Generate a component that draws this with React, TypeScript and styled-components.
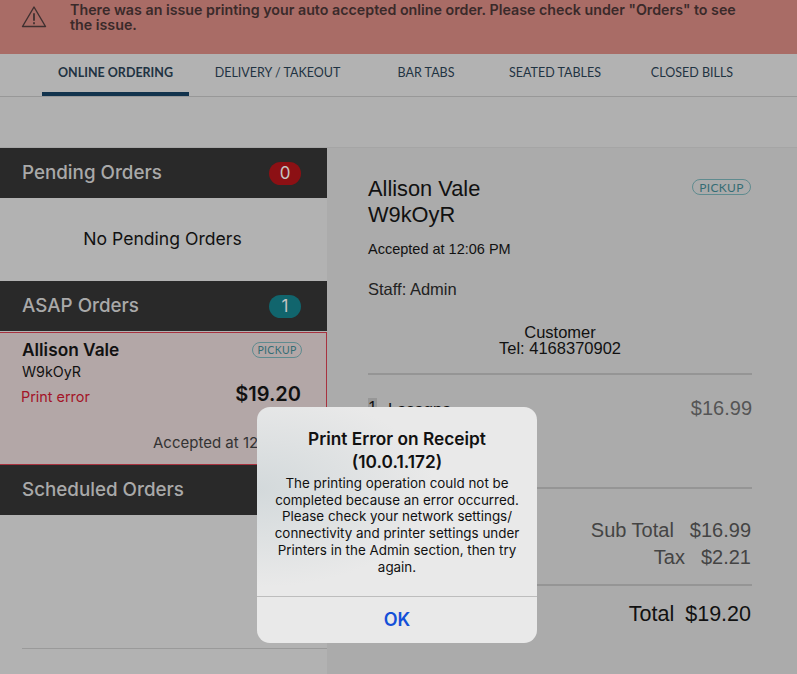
import styled, { createGlobalStyle } from "styled-components";

export default App;

const GlobalStyle = createGlobalStyle`
  html, body {
    margin: 0;
    padding: 0;
    background: #ababab;
  }
  * {
    box-sizing: border-box;
  }
`;

const sans = `"Open Sans", "Liberation Sans", sans-serif`;
const helvetica = `"Liberation Sans", Arial, sans-serif`;

const Page = styled.div`
  position: relative;
  width: 797px;
  height: 674px;
  overflow: hidden;
  background: #ababab;
  font-family: ${sans};
`;

const Banner = styled.div`
  height: 54px;
  background: #a96c66;
  display: flex;
  padding-left: 21px;
  gap: 23px;
`;

const BannerText = styled.div`
  width: 680px;
  margin-top: 2px;
  font-family: Inter, sans-serif;
  font-size: 14.25px;
  line-height: 15px;
  font-weight: 600;
  color: #3a2a2a;
`;

const TabBar = styled.div`
  height: 43px;
  background: #b2b2b2;
  border-bottom: 1px solid #989898;
  display: flex;
  padding-left: 42px;
`;

const Tab = styled.div<{ $active?: boolean; $width: number }>`
  width: ${(props) => props.$width}px;
  height: 42px;
  display: flex;
  justify-content: center;
  padding-top: 11px;
  font-family: Lato, sans-serif;
  font-size: 12.5px;
  line-height: 16px;
  font-weight: ${(props) => (props.$active ? 700 : 400)};
  color: #1f3342;
  border-bottom: ${(props) => (props.$active ? "4px solid #12334d" : "none")};
`;

const Spacer = styled.div`
  height: 51px;
  background: #b0b0b0;
  border-bottom: 1px solid #a5a5a5;
`;

const Columns = styled.div`
  display: flex;
  height: 526px;
`;

const LeftColumn = styled.div`
  width: 327px;
  background: #b2b2b2;
`;

const SectionHeader = styled.div`
  height: 50px;
  background: #292929;
  display: flex;
  align-items: center;
  justify-content: space-between;
  padding: 0 26px 1px 22px;
  font-family: Inter, sans-serif;
  font-size: 18.8px;
  font-weight: 500;
  color: #a9a9a9;
`;

const Count = styled.div<{ $color: string }>`
  width: 32px;
  height: 23px;
  margin-top: 1px;
  border-radius: 12px;
  background: ${(props) => props.$color};
  display: flex;
  align-items: center;
  justify-content: center;
  font-size: 17px;
  font-weight: 400;
  color: #c4c4c4;
`;

const EmptyNote = styled.div`
  height: 83px;
  display: flex;
  align-items: center;
  justify-content: center;
  padding: 0 2px 2px 0;
  font-family: Inter, sans-serif;
  font-size: 17.6px;
  color: #111;
`;

const OrderCard = styled.div`
  height: 133px;
  margin-top: 1px;
  background: #b3a7a7;
  border: 1px solid #a8323f;
  border-left: none;
  padding: 5px 25px 0 22px;
  font-family: Inter, sans-serif;
  color: #111;
`;

const CardRow = styled.div`
  display: flex;
  justify-content: space-between;
  align-items: center;
`;

const ErrorRow = styled(CardRow)`
  margin-top: 4px;
`;

const CardName = styled.div`
  font-size: 17.3px;
  line-height: 23px;
  font-weight: 600;
`;

const CardCode = styled.div`
  font-size: 14.3px;
  line-height: 20px;
  margin-top: 1px;
`;

const PrintError = styled.div`
  margin-left: -1px;
  font-size: 14.4px;
  color: #a31428;
`;

const CardTotal = styled.div`
  margin-top: -4px;
  font-size: 20px;
  font-weight: 600;
`;

const CardAccepted = styled.div`
  margin-top: 27px;
  padding-left: 131px;
  font-size: 15px;
  line-height: 20px;
  white-space: nowrap;
  color: #333;
`;

const Pill = styled.div<{ $wide?: boolean }>`
  width: ${(props) => (props.$wide ? 59 : 50)}px;
  height: 16px;
  margin: ${(props) => (props.$wide ? "3px 1px 0 0" : "0 -1px 0 0")};
  border: 1px solid #5f8b8f;
  border-radius: 8px;
  display: flex;
  align-items: center;
  justify-content: center;
  font-family: Lato, sans-serif;
  font-size: ${(props) => (props.$wide ? 12 : 10.5)}px;
  letter-spacing: 0.3px;
  color: #356d74;
`;

const FooterRule = styled.div`
  margin: 133px 0 0 22px;
  height: 1px;
  background: #9a9a9a;
`;

const Detail = styled.div`
  flex: 1;
  background: #ababab;
  padding: 28px 45px 0 41px;
  font-family: ${helvetica};
  color: #111;
`;

const DetailTop = styled.div`
  display: flex;
  justify-content: space-between;
`;

const DetailName = styled.div`
  font-size: 21.8px;
  line-height: 26px;
`;

const Accepted = styled.div`
  margin-top: 12px;
  font-size: 14.5px;
  line-height: 18px;
`;

const Staff = styled.div`
  margin-top: 21px;
  font-size: 16.5px;
  line-height: 20px;
  color: #222;
`;

const CustomerBlock = styled.div`
  margin-top: 25px;
  text-align: center;
  font-size: 16.5px;
  line-height: 16px;
  padding-bottom: 17px;
  border-bottom: 2px solid #959595;
`;

const ItemRow = styled.div`
  display: flex;
  justify-content: space-between;
  height: 114px;
  padding-top: 22px;
  font-size: 16.5px;
  border-bottom: 2px solid #959595;
`;

const ItemName = styled.div`
  display: flex;
  gap: 11px;
  align-items: flex-start;
  margin-top: 3px;
`;

const ItemQty = styled.span`
  width: 9px;
  margin-top: -2px;
  text-align: center;
  background: #979797;
`;

const ItemPrice = styled.div`
  font-size: 20px;
  color: #555;
`;

const Totals = styled.div`
  padding: 28px 1px 0 0;
  height: 97px;
  border-bottom: 2px solid #959595;
`;

const TotalLine = styled.div`
  display: flex;
  justify-content: flex-end;
  gap: 16px;
  font-size: 20px;
  line-height: 27px;
  color: #444;
`;

const GrandTotal = styled(TotalLine)`
  margin-top: 15px;
  padding-right: 1px;
  gap: 11px;
  font-size: 21.5px;
  color: #111;
`;

const Dialog = styled.div`
  position: absolute;
  left: 257px;
  top: 407px;
  width: 280px;
  height: 236px;
  border-radius: 13px;
  background: radial-gradient(ellipse at 0% 35%, #d3d9db 0%, #e9e9e9 45%);
  font-family: Inter, sans-serif;
  color: #111;
  text-align: center;
  display: flex;
  flex-direction: column;
`;

const DialogBody = styled.div`
  height: 190px;
  padding-top: 20px;
  border-bottom: 1px solid #bdbdbd;
`;

const DialogTitle = styled.div`
  font-size: 17.3px;
  line-height: 23px;
  font-weight: 600;
`;

const DialogText = styled.div`
  font-size: 13.4px;
  line-height: 16.7px;
  margin-top: 2px;
  white-space: nowrap;
`;

const DialogAction = styled.div`
  flex: 1;
  display: flex;
  align-items: center;
  justify-content: center;
  padding-bottom: 2px;
  font-size: 18px;
  font-weight: 600;
  color: #1450d8;
`;

function WarningIcon() {
  return (
    <svg width="26" height="24" viewBox="0 0 26 24" fill="none" stroke="#3f3030" strokeWidth="1.4" strokeLinejoin="round" strokeLinecap="round" style={{ marginTop: 5 }}>
      <path d="M13 2 L24.5 21.5 H1.5 Z" />
      <path d="M13 9 V15" strokeWidth="1.8" />
      <path d="M13 18 V18.4" strokeWidth="1.8" />
    </svg>
  );
}

function App() {
  return (
    <Page>
      <GlobalStyle />
      <Banner>
        <WarningIcon />
        <BannerText>
          There was an issue printing your auto accepted online order. Please check under "Orders" to see the issue.
        </BannerText>
      </Banner>
      <TabBar>
        <Tab $active $width={147}>ONLINE ORDERING</Tab>
        <Tab $width={177}>DELIVERY / TAKEOUT</Tab>
        <Tab $width={120}>BAR TABS</Tab>
        <Tab $width={138}>SEATED TABLES</Tab>
        <Tab $width={136}>CLOSED BILLS</Tab>
      </TabBar>
      <Spacer />
      <Columns>
        <LeftColumn>
          <SectionHeader>
            Pending Orders
            <Count $color="#8c1014">0</Count>
          </SectionHeader>
          <EmptyNote>No Pending Orders</EmptyNote>
          <SectionHeader>
            ASAP Orders
            <Count $color="#11656d">1</Count>
          </SectionHeader>
          <OrderCard>
            <CardRow>
              <CardName>Allison Vale</CardName>
              <Pill>PICKUP</Pill>
            </CardRow>
            <CardCode>W9kOyR</CardCode>
            <ErrorRow>
              <PrintError>Print error</PrintError>
              <CardTotal>$19.20</CardTotal>
            </ErrorRow>
            <CardAccepted>Accepted at 12:06 PM</CardAccepted>
          </OrderCard>
          <SectionHeader>Scheduled Orders</SectionHeader>
          <FooterRule />
        </LeftColumn>
        <Detail>
          <DetailTop>
            <DetailName>
              Allison Vale
              <br />
              W9kOyR
            </DetailName>
            <Pill $wide>PICKUP</Pill>
          </DetailTop>
          <Accepted>Accepted at 12:06 PM</Accepted>
          <Staff>Staff: Admin</Staff>
          <CustomerBlock>
            Customer
            <br />
            Tel: 4168370902
          </CustomerBlock>
          <ItemRow>
            <ItemName>
              <ItemQty>1</ItemQty>
              <span>Lasagna</span>
            </ItemName>
            <ItemPrice>$16.99</ItemPrice>
          </ItemRow>
          <Totals>
            <TotalLine>
              <span>Sub Total</span>
              <span>$16.99</span>
            </TotalLine>
            <TotalLine>
              <span>Tax</span>
              <span>$2.21</span>
            </TotalLine>
          </Totals>
          <GrandTotal>
            <span>Total</span>
            <span>$19.20</span>
          </GrandTotal>
        </Detail>
      </Columns>
      <Dialog>
        <DialogBody>
          <DialogTitle>
            Print Error on Receipt
            <br />
            (10.0.1.172)
          </DialogTitle>
          <DialogText>
            The printing operation could not be
            <br />
            completed because an error occurred.
            <br />
            Please check your network settings/
            <br />
            connectivity and printer settings under
            <br />
            Printers in the Admin section, then try
            <br />
            again.
          </DialogText>
        </DialogBody>
        <DialogAction>OK</DialogAction>
      </Dialog>
    </Page>
  );
}
